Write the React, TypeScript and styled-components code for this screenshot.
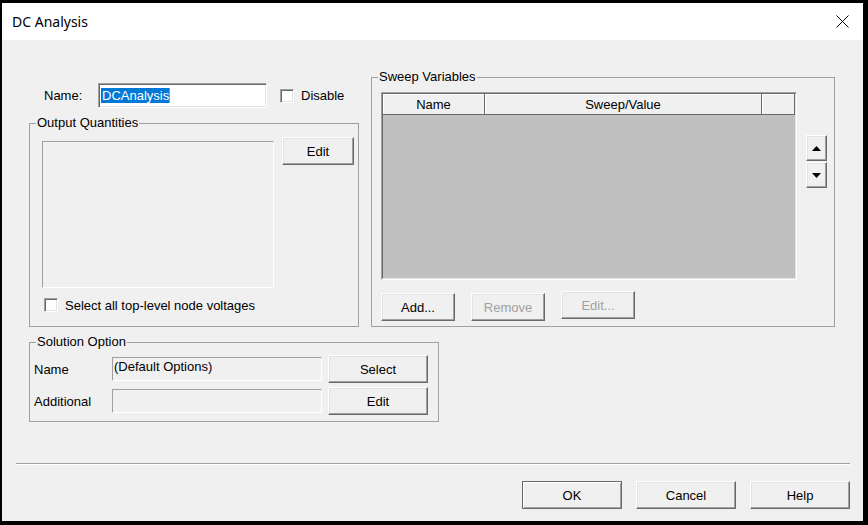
import React from 'react';
import styled, {createGlobalStyle, css} from 'styled-components';

const GlobalStyle = createGlobalStyle`
  html, body {
    margin: 0;
    background: #000;
  }
  body {
    font-family: "Liberation Sans", Arial, sans-serif;
    font-size: 13px;
    color: #000;
  }
`;

const Window = styled.div`
  margin: 3px 0 0 2px;
  width: 861px;
  height: 518px;
  background: #f0f0f0;
  display: flex;
  flex-direction: column;
`;

const TitleBar = styled.div`
  height: 37px;
  flex: none;
  background: #fff;
  display: flex;
  align-items: center;
  justify-content: space-between;
  padding: 0 14px 0 10px;
  font-family: "Noto Sans", "Open Sans", sans-serif;
  font-size: 14px;
`;

const Body = styled.div`
  flex: 1;
  display: flex;
  flex-direction: column;
  padding: 0 13px 12px 14px;
`;

const Main = styled.div`
  padding: 37px 0 0 13px;
`;

const TopRow = styled.div`
  display: flex;
  align-items: flex-start;
  gap: 12px;
`;

const LeftColumn = styled.div`
  display: flex;
  flex-direction: column;
`;

const NameRow = styled.div`
  display: flex;
  align-items: center;
  height: 25px;
  margin-top: 6px;
  padding-left: 15px;
`;

const NameLabel = styled.span`
  width: 54px;
`;

const TextInput = styled.div`
  width: 169px;
  height: 25px;
  box-sizing: border-box;
  border: 1px solid;
  border-color: #a0a0a0 #fff #fff #a0a0a0;
  box-shadow: inset 1px 1px #696969, inset -1px -1px #e3e3e3;
  background: #fff;
  padding: 4px 0 0 2px;
`;

const Selected = styled.span`
  display: inline-block;
  height: 15px;
  line-height: 15px;
  padding-left: 1px;
  background: #0078d7;
  color: #fff;
  border-right: 1px solid #f0891c;
`;

const CheckRow = styled.label<{$indent?: number}>`
  display: flex;
  align-items: center;
  gap: 7px;
  margin-left: ${p => p.$indent ?? 0}px;
`;

const CheckBox = styled.span`
  width: 14px;
  height: 14px;
  box-sizing: border-box;
  border: 1px solid;
  border-color: #a0a0a0 #fff #fff #a0a0a0;
  box-shadow: inset 1px 1px #696969, inset -1px -1px #e3e3e3;
  background: #fff;
`;

const Group = styled.div<{$width: number; $top?: number}>`
  width: ${p => p.$width}px;
  margin-top: ${p => p.$top ?? 0}px;
  box-sizing: border-box;
  border: 1px solid #a0a0a0;
  display: flex;
  flex-direction: column;
`;

const Caption = styled.div`
  align-self: flex-start;
  margin: -8px 0 0 6px;
  padding: 0 1px;
  height: 14px;
  line-height: 14px;
  background: #f0f0f0;
`;

const OutputBody = styled.div`
  padding: 7px 4px 13px 12px;
`;

const OutputRow = styled.div`
  display: flex;
  align-items: flex-start;
  gap: 8px;
`;

const ListBox = styled.div`
  width: 232px;
  height: 147px;
  margin-top: 4px;
  box-sizing: border-box;
  border: 1px solid;
  border-color: #a0a0a0 #fff #fff #a0a0a0;
`;

const CheckLine = styled.div`
  margin-top: 9px;
  height: 16px;
  display: flex;
  align-items: center;
`;

const SweepBody = styled.div`
  padding: 8px 7px 5px 9px;
`;

const SweepRow = styled.div`
  display: flex;
  align-items: flex-start;
  gap: 9px;
`;

const TableFrame = styled.div`
  width: 416px;
  height: 188px;
  box-sizing: border-box;
  border: 1px solid;
  border-color: #a0a0a0 #fff #fff #a0a0a0;
`;

const TableInner = styled.div`
  height: 100%;
  box-sizing: border-box;
  border: 1px solid;
  border-color: #696969 #e3e3e3 #e3e3e3 #696969;
  display: flex;
  flex-direction: column;
`;

const HeaderRow = styled.div`
  display: grid;
  grid-template-columns: 102px 277px 1fr;
  height: 21px;
`;

const HeaderCell = styled.div`
  box-sizing: border-box;
  background: #f0f0f0;
  border-right: 1px solid #696969;
  border-bottom: 1px solid #696969;
  box-shadow: inset 1px 1px #fff;
  display: flex;
  align-items: center;
  justify-content: center;
`;

const TableBody = styled.div`
  flex: 1;
  background: #c0c0c0;
`;

const ArrowColumn = styled.div`
  margin-top: 43px;
  display: flex;
  flex-direction: column;
  gap: 1px;
`;

const ButtonRow = styled.div<{$top?: number; $gap: number; $end?: boolean}>`
  display: flex;
  align-items: flex-start;
  gap: ${p => p.$gap}px;
  margin-top: ${p => p.$top ?? 0}px;
  justify-content: ${p => (p.$end ? 'flex-end' : 'flex-start')};
`;

const Button = styled.button<{$w: number; $h?: number; $default?: boolean; $lift?: number}>`
  width: ${p => p.$w}px;
  height: ${p => p.$h ?? 28}px;
  margin: ${p => -(p.$lift ?? 0)}px 0 0 0;
  padding: 0;
  box-sizing: border-box;
  font-family: "Liberation Sans", Arial, sans-serif;
  font-size: 13px;
  color: #000;
  background: #f0f0f0;
  border: 1px solid;
  border-color: #fff #696969 #696969 #fff;
  box-shadow: inset -1px -1px #a0a0a0, inset 1px 1px #e3e3e3;
  display: flex;
  align-items: center;
  justify-content: center;
  &:disabled {
    color: #a0a0a0;
  }
  ${p => p.$default && css`
    border-color: #696969;
    box-shadow: inset 1px 1px #fff, inset -1px -1px #a0a0a0;
  `}
`;

const SolutionBody = styled.div`
  padding: 6px 10px 6px 4px;
  display: flex;
  flex-direction: column;
  gap: 4px;
`;

const OptionRow = styled.div`
  display: flex;
  align-items: center;
  height: 28px;
`;

const OptionLabel = styled.span`
  width: 78px;
`;

const Field = styled.div`
  width: 210px;
  height: 24px;
  margin-right: 6px;
  box-sizing: border-box;
  border: 1px solid;
  border-color: #a0a0a0 #fff #fff #a0a0a0;
  padding: 1px 1px;
  line-height: 15px;
`;

const Separator = styled.div`
  margin-top: auto;
  border-top: 1px solid #a0a0a0;
  border-bottom: 1px solid #fff;
`;

const Arrow = ({up}: {up?: boolean}) => (
  <svg width="9" height="5" viewBox="0 0 9 5">
    <polygon points={up ? '4.5,0 9,5 0,5' : '0,0 9,0 4.5,5'} fill="#000"/>
  </svg>
);

const CloseIcon = () => (
  <svg width="13" height="13" viewBox="0 0 13 13">
    <path d="M0.5 0.5 L12.5 12.5 M12.5 0.5 L0.5 12.5" stroke="#000" strokeWidth="1" fill="none"/>
  </svg>
);

const App = () => {
  return (
    <>
      <GlobalStyle/>
      <Window>
        <TitleBar>
          <span>DC Analysis</span>
          <CloseIcon/>
        </TitleBar>
        <Body>
          <Main>
            <TopRow>
              <LeftColumn>
                <NameRow>
                  <NameLabel>Name:</NameLabel>
                  <TextInput><Selected>DCAnalysis</Selected></TextInput>
                  <CheckRow $indent={13}>
                    <CheckBox/>
                    <span>Disable</span>
                  </CheckRow>
                </NameRow>
                <Group $width={330} $top={15}>
                  <Caption>Output Quantities</Caption>
                  <OutputBody>
                    <OutputRow>
                      <ListBox/>
                      <Button $w={72}>Edit</Button>
                    </OutputRow>
                    <CheckLine>
                      <CheckRow $indent={2}>
                        <CheckBox/>
                        <span>Select all top-level node voltages</span>
                      </CheckRow>
                    </CheckLine>
                  </OutputBody>
                </Group>
              </LeftColumn>

              <Group $width={464}>
                <Caption>Sweep Variables</Caption>
                <SweepBody>
                  <SweepRow>
                    <TableFrame>
                      <TableInner>
                        <HeaderRow>
                          <HeaderCell>Name</HeaderCell>
                          <HeaderCell>Sweep/Value</HeaderCell>
                          <HeaderCell/>
                        </HeaderRow>
                        <TableBody/>
                      </TableInner>
                    </TableFrame>
                    <ArrowColumn>
                      <Button $w={21} $h={26}><Arrow up/></Button>
                      <Button $w={21} $h={26}><Arrow/></Button>
                    </ArrowColumn>
                  </SweepRow>
                  <ButtonRow $top={13} $gap={16}>
                    <Button $w={74}>Add...</Button>
                    <Button $w={74} disabled>Remove</Button>
                    <Button $w={74} $lift={2} disabled>Edit...</Button>
                  </ButtonRow>
                </SweepBody>
              </Group>
            </TopRow>

            <Group $width={410} $top={15}>
              <Caption>Solution Option</Caption>
              <SolutionBody>
                <OptionRow>
                  <OptionLabel>Name</OptionLabel>
                  <Field>(Default Options)</Field>
                  <Button $w={100}>Select</Button>
                </OptionRow>
                <OptionRow>
                  <OptionLabel>Additional</OptionLabel>
                  <Field/>
                  <Button $w={100}>Edit</Button>
                </OptionRow>
              </SolutionBody>
            </Group>
          </Main>

          <Separator/>
          <ButtonRow $top={16} $gap={14} $end>
            <Button $w={100} $default>OK</Button>
            <Button $w={100}>Cancel</Button>
            <Button $w={100}>Help</Button>
          </ButtonRow>
        </Body>
      </Window>
    </>
  );
};

export default App;
